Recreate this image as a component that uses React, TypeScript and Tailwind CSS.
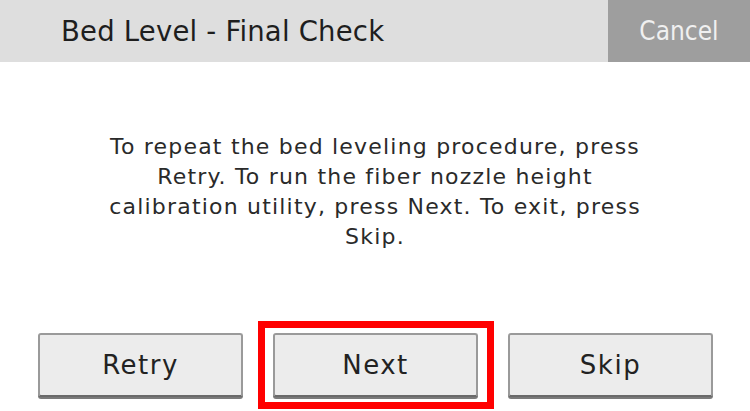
const buttonClass =
  "w-[205px] h-[64px] rounded-[3px] border-2 border-[#9a9a9a] border-b-[#6a6a6a] bg-[#ececec] text-[26px] tracking-[1.5px] text-[#222] shadow-[0_2px_0_#7a7a7a] flex items-center justify-center";

const App = () => {
  return (
    <div
      className="w-[750px] h-[411px] bg-white overflow-hidden flex flex-col"
      style={{ fontFamily: '"DejaVu Sans", Verdana, sans-serif' }}
    >
      {/* Header */}
      <header className="h-[62px] flex bg-[#dedede]">
        <h1 className="flex-1 flex items-center pl-[61px] text-[27.5px] tracking-[0.2px] text-[#1e1e1e] pt-[1px]">
          Bed Level - Final Check
        </h1>
        <button
          className="w-[142px] bg-[#9e9e9e] text-[#f0f0f0] text-[26px] font-light flex items-center justify-center pt-[1px]"
          style={{ fontFamily: '"DejaVu Sans Condensed", "DejaVu Sans", sans-serif' }}
        >
          Cancel
        </button>
      </header>

      {/* Message */}
      <main className="flex-1 flex flex-col">
        <p className="pt-[70px] text-center text-[22px] tracking-[1.2px] leading-[30px] text-[#2a2a2a]">
          To repeat the bed leveling procedure, press
          <br />
          Retry. To run the fiber nozzle height
          <br />
          calibration utility, press Next. To exit, press
          <br />
          Skip.
        </p>

        {/* Actions */}
        <div className="mt-auto mb-[14px] flex gap-[30px] pl-[38px]">
          <button className={buttonClass}>Retry</button>
          <div className="relative">
            <button className={buttonClass}>Next</button>
            <span className="absolute -left-[15px] -right-[16px] -top-[12px] -bottom-[12px] border-[7px] border-[#ff0000] pointer-events-none" />
          </div>
          <button className={buttonClass}>Skip</button>
        </div>
      </main>
    </div>
  );
};

export default App;
